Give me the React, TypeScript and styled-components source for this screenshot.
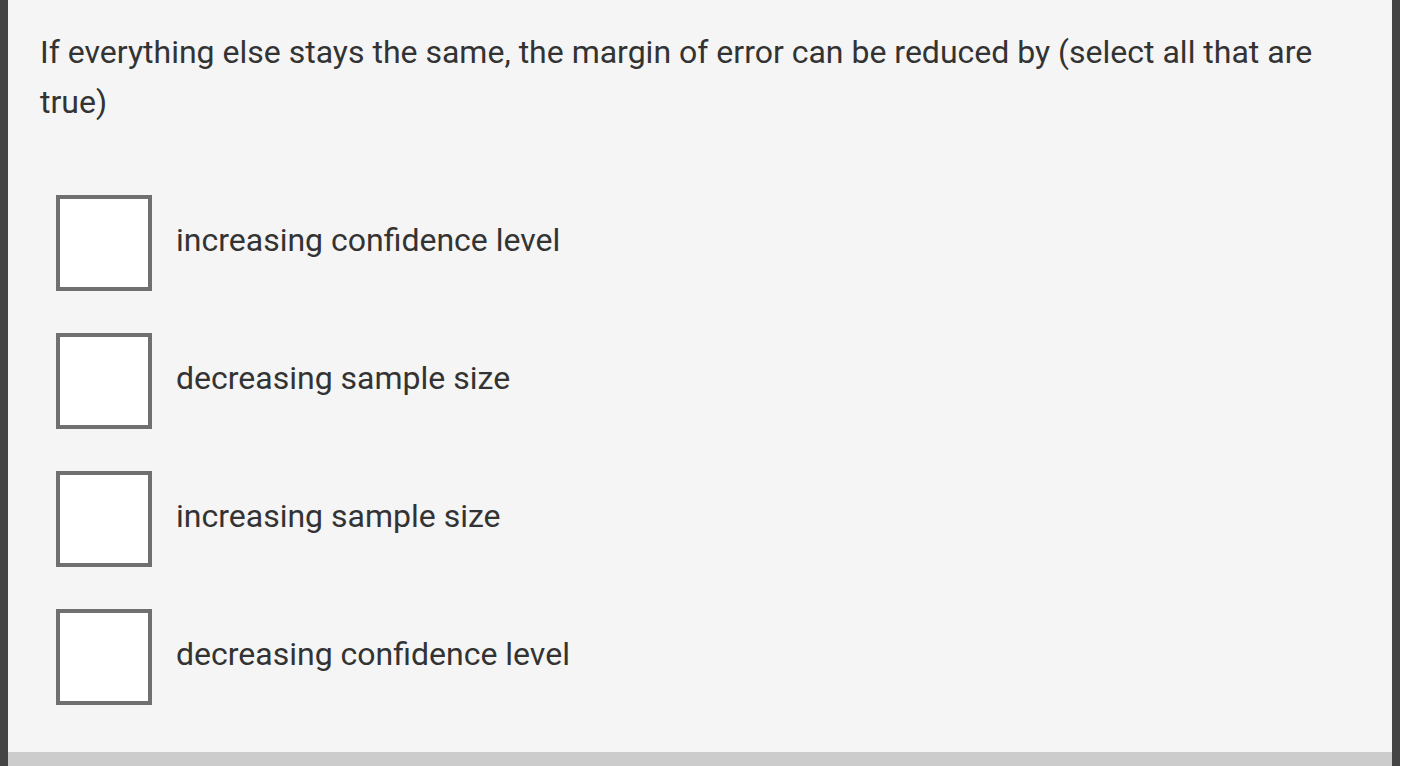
import styled, { createGlobalStyle } from 'styled-components';

const GlobalStyle = createGlobalStyle`
  html, body {
    margin: 0;
    padding: 0;
    background: #ffffff;
    font-family: Roboto, "Liberation Sans", Arial, sans-serif;
  }
`;

const options = [
  'increasing confidence level',
  'decreasing sample size',
  'increasing sample size',
  'decreasing confidence level',
];

const App = () => {
  return (
    <>
      <GlobalStyle />
      <Frame>
        <Panel>
          <Question>
            If everything else stays the same, the margin of error can be reduced by (select all that are true)
          </Question>
          <OptionList>
            {options.map((label) => (
              <Option key={label}>
                <CheckBox />
                <OptionLabel>{label}</OptionLabel>
              </Option>
            ))}
          </OptionList>
        </Panel>
        <Footer />
      </Frame>
    </>
  );
};

export default App;

const Frame = styled.div`
  width: 1384px;
  height: 766px;
  border-left: 8px solid #444444;
  border-right: 8px solid #444444;
  background: #f5f5f5;
  display: flex;
  flex-direction: column;
  overflow: hidden;
`;

const Panel = styled.div`
  flex: 1;
  padding: 27px 40px 0 32px;
  display: flex;
  flex-direction: column;
`;

const Question = styled.p`
  margin: 0;
  font-size: 32px;
  line-height: 50px;
  color: #333333;
`;

const OptionList = styled.div`
  display: flex;
  flex-direction: column;
  gap: 42px;
  margin-top: 68px;
  padding-left: 16px;
`;

const Option = styled.label`
  display: flex;
  align-items: center;
  gap: 24px;
  cursor: pointer;
`;

const CheckBox = styled.span`
  box-sizing: border-box;
  width: 96px;
  height: 96px;
  border: 4px solid #707070;
  background: #ffffff;
  flex-shrink: 0;
`;

const OptionLabel = styled.span`
  font-size: 32px;
  line-height: 40px;
  padding-bottom: 6px;
  color: #333333;
`;

const Footer = styled.div`
  height: 14px;
  background: #cccccc;
`;
